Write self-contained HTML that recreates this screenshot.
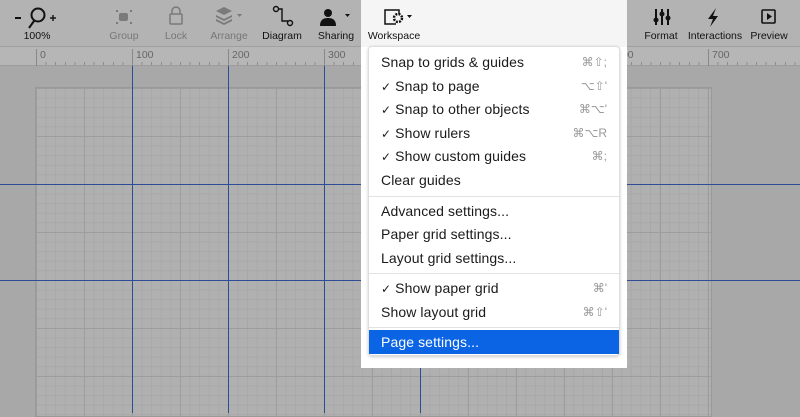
<!DOCTYPE html>
<html><head><meta charset="utf-8"><style>
*{margin:0;padding:0;box-sizing:border-box}
body{width:800px;height:413px;overflow:hidden;background:#a8a8a8;font-family:"Liberation Sans",Arial,sans-serif;position:relative}
.tb{position:absolute;left:0;top:0;width:800px;height:47px;background:#b3b3b3;border-bottom:1px solid #a0a0a0}
.lbl{position:absolute;top:30px;font-size:10.5px;color:#111;transform:translateX(-50%);white-space:nowrap}
.dim{color:#777}
.ruler{position:absolute;left:0;top:47px;width:800px;height:19px;background:#b6b6b6;border-bottom:1px solid #9c9c9c;
background-image:repeating-linear-gradient(90deg,#8c8c8c 0 1px,transparent 1px 9.6px);background-size:100% 4px;background-repeat:no-repeat;background-position:36px 15px}
.rn{position:absolute;top:49px;font-size:10.5px;color:#666;border-left:1px solid #888;padding-left:3px;height:17px}
.page{position:absolute;left:35px;top:87px;width:677px;height:330px;background-color:#b0b0b0;border:1px solid #999;
background-image:linear-gradient(90deg,#9d9d9d 1px,transparent 1px),linear-gradient(#9d9d9d 1px,transparent 1px),linear-gradient(90deg,#a8a8a8 1px,transparent 1px),linear-gradient(#a8a8a8 1px,transparent 1px);
background-size:48px 48px,48px 48px,9.6px 9.6px,9.6px 9.6px;background-position:0 0}
.vl{position:absolute;top:66px;width:1px;height:347px;background:#2f4c96}
.hl{position:absolute;left:0;width:800px;height:1px;background:#2f4c96}
.panel{position:absolute;left:361px;top:0;width:266px;height:368px;background:#f5f5f5}
.panel .bot{position:absolute;left:0;top:47px;width:266px;height:321px;background:#fff}
.menu{position:absolute;left:368px;top:46px;width:252px;height:310px;background:#fff;border:1px solid #ddd;border-radius:4px;box-shadow:0 1px 3px rgba(0,0,0,.2)}
.it{position:absolute;left:12px;font-size:14px;color:#1a1a1a;white-space:nowrap;letter-spacing:0.1px}
.ck{font-size:12px}
.sc{position:absolute;right:12px;font-size:12px;color:#999}
.sep{position:absolute;left:0;width:250px;height:1px;background:#e2e2e2}
.hi{position:absolute;left:0;top:283px;width:250px;height:24px;background:#0a64e4}
</style></head><body>
<div class="tb"></div>
<div class="ruler"></div>
<div class="rn" style="left:36px">0</div>
<div class="rn" style="left:132px">100</div>
<div class="rn" style="left:228px">200</div>
<div class="rn" style="left:324px">300</div>
<div class="rn" style="left:612px">600</div>
<div class="rn" style="left:708px">700</div>
<div class="page"></div>
<div class="vl" style="left:132px"></div>
<div class="vl" style="left:228px"></div>
<div class="vl" style="left:324px"></div>
<div class="vl" style="left:420px"></div>
<div class="hl" style="top:184px"></div>
<div class="hl" style="top:280px"></div>

<svg style="position:absolute;left:0;top:0" width="800" height="47">
<g fill="none" stroke="#111" stroke-width="2">
<line x1="15" y1="18" x2="21" y2="18"/>
<circle cx="38" cy="15" r="6.5"/><line x1="34" y1="21" x2="29" y2="28"/>
<line x1="50" y1="18" x2="56" y2="18" stroke-width="1.4"/><line x1="53" y1="15" x2="53" y2="21" stroke-width="1.4"/>
</g>
<g fill="#7a7a7a"><rect x="119" y="13" width="9" height="8" rx="2"/><rect x="116" y="10" width="2" height="2"/><rect x="130" y="10" width="2" height="2"/><rect x="116" y="22" width="2" height="2"/><rect x="130" y="22" width="2" height="2"/></g>
<g fill="none" stroke="#7a7a7a" stroke-width="1.5"><rect x="170" y="14" width="12" height="10" rx="1"/><path d="M172 14v-3a4 4 0 0 1 8 0v3"/></g>
<g fill="#7a7a7a"><path d="M216 11l8 -4 8 4 -8 4z"/><path d="M216 15l8 4 8-4v2l-8 4-8-4z"/><path d="M216 19l8 4 8-4v2l-8 4-8-4z"/><path d="M237 14h5l-2.5 3z"/></g>
<g fill="none" stroke="#111" stroke-width="1.4"><circle cx="276" cy="9" r="2.5"/><circle cx="290" cy="23" r="2.5"/><path d="M278 9h4v12h6"/></g>
<g fill="#111"><circle cx="328" cy="13" r="4"/><path d="M320 26c0-6 3-8 8-8s8 2 8 8z"/><path d="M345 14h5l-2.5 3z"/></g>
<g fill="#111"><rect x="655" y="9" width="2" height="16"/><rect x="661" y="9" width="2" height="16"/><rect x="667" y="9" width="2" height="16"/><circle cx="656" cy="20" r="2.5"/><circle cx="662" cy="14" r="2.5"/><circle cx="668" cy="18" r="2.5"/>
<path d="M716 8l-8 11h5l-3 8 8-11h-5z"/></g>
<g fill="none" stroke="#111" stroke-width="1.6"><rect x="762" y="10" width="13" height="13" rx="1"/></g>
<path d="M767 13v7l5-3.5z" fill="#111"/>
</svg>
<div class="lbl" style="left:37px">100%</div>
<div class="lbl dim" style="left:124px">Group</div>
<div class="lbl dim" style="left:176px">Lock</div>
<div class="lbl dim" style="left:229px">Arrange</div>
<div class="lbl" style="left:282px">Diagram</div>
<div class="lbl" style="left:336px">Sharing</div>
<div class="lbl" style="left:661px">Format</div>
<div class="lbl" style="left:715px">Interactions</div>
<div class="lbl" style="left:769px">Preview</div>

<div class="panel"><div class="bot"></div></div>
<svg style="position:absolute;left:361px;top:0" width="70" height="47">
<g fill="none" stroke="#111" stroke-width="1.5"><path d="M35 24h-11v-14h14v4"/></g>
<circle cx="37" cy="18" r="4" fill="none" stroke="#111" stroke-width="2.5" stroke-dasharray="2 1.2"/>
<path d="M46 15h5l-2.5 3z" fill="#111"/>
</svg>
<div class="lbl" style="left:394px">Workspace</div>

<div class="menu">
<div class="it" style="top:7px">Snap to grids &amp; guides</div><div class="sc" style="top:8px">⌘⇧;</div>
<div class="it" style="top:31px"><span class="ck">✓</span> Snap to page</div><div class="sc" style="top:32px">⌥⇧'</div>
<div class="it" style="top:54px"><span class="ck">✓</span> Snap to other objects</div><div class="sc" style="top:55px">⌘⌥'</div>
<div class="it" style="top:78px"><span class="ck">✓</span> Show rulers</div><div class="sc" style="top:79px">⌘⌥R</div>
<div class="it" style="top:101px"><span class="ck">✓</span> Show custom guides</div><div class="sc" style="top:102px">⌘;</div>
<div class="it" style="top:125px">Clear guides</div>
<div class="sep" style="top:149px"></div>
<div class="it" style="top:156px">Advanced settings...</div>
<div class="it" style="top:179px">Paper grid settings...</div>
<div class="it" style="top:203px">Layout grid settings...</div>
<div class="sep" style="top:226px"></div>
<div class="it" style="top:233px"><span class="ck">✓</span> Show paper grid</div><div class="sc" style="top:234px">⌘'</div>
<div class="it" style="top:257px">Show layout grid</div><div class="sc" style="top:258px">⌘⇧'</div>
<div class="sep" style="top:280px"></div>
<div class="hi"></div>
<div class="it" style="top:287px;color:#fff">Page settings...</div>
</div>
</body></html>
